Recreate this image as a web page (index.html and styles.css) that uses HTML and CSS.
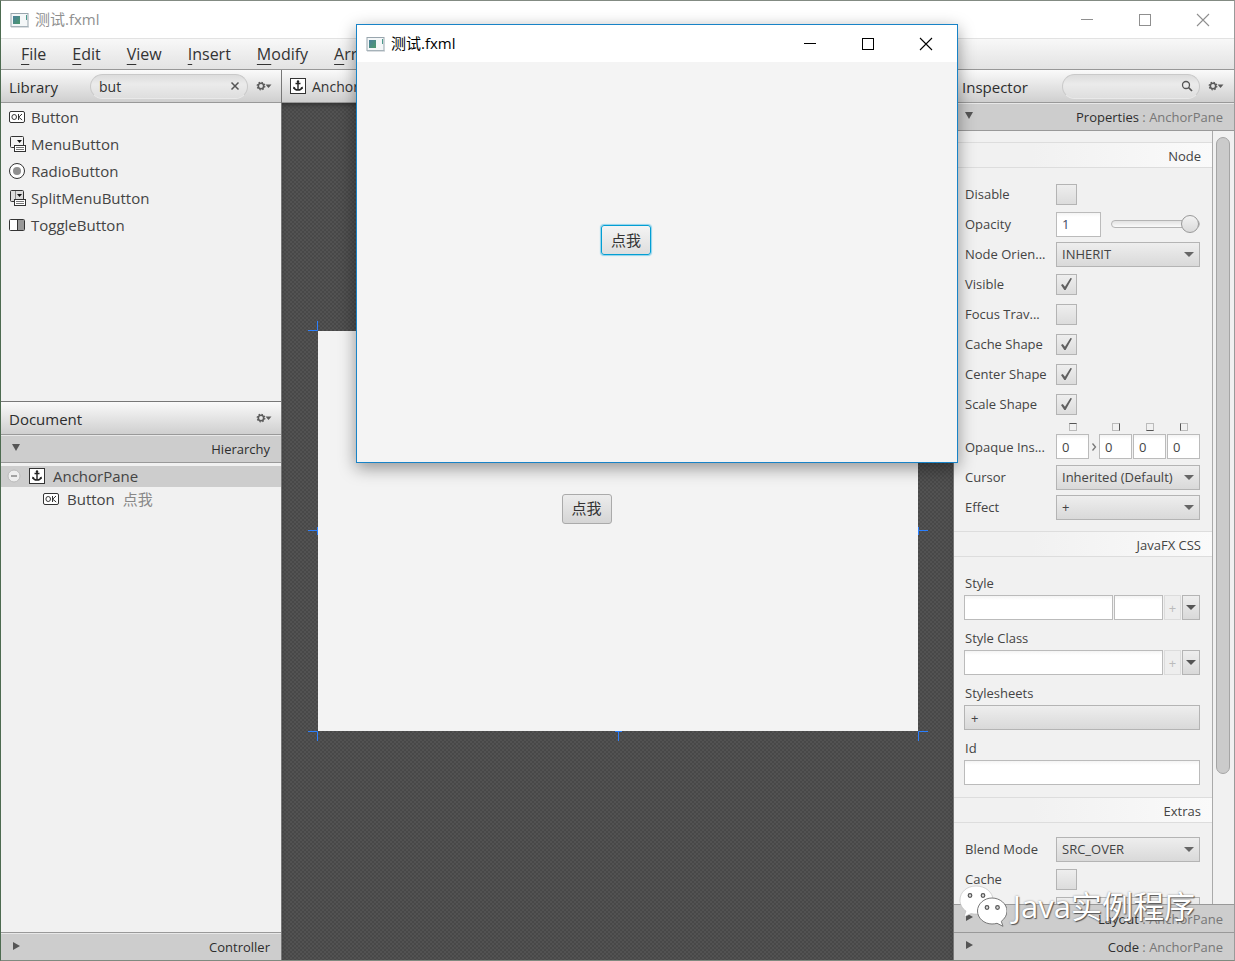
FILE: index.html
```html
<!DOCTYPE html>
<html lang="en">
<head>
<meta charset="utf-8">
<title>测试.fxml</title>
<link rel="stylesheet" href="styles.css">
</head>
<body>
<svg class="defs" aria-hidden="true">
  <defs>
    <linearGradient id="tealfill" x1="0" y1="0" x2="1" y2="1"><stop offset="0" stop-color="#4a7f9c"/><stop offset="1" stop-color="#4c9a6c"/></linearGradient>
    <symbol id="app" viewBox="0 0 20 16"><rect x="1" y="1.500" width="17" height="13" fill="#f4f7f8" stroke="#98a5ad"/><rect x="3" y="4" width="7" height="8" fill="url(#tealfill)"/><path d="M16.500 3v5" stroke="#4c9a8c"/><path d="M1 15h18" stroke="#b5bec4"/></symbol>
    <symbol id="ok" viewBox="0 0 18 18"><rect x="1.500" y="3.500" width="15" height="11" rx="1.500" fill="#fff" stroke="#333"/><ellipse cx="6.200" cy="9" rx="2.300" ry="2.500" fill="none" stroke="#333"/><path d="M10.500 6v6M14 6l-3.300 3.200L14.200 12" fill="none" stroke="#333"/></symbol>
    <symbol id="menub" viewBox="0 0 18 18"><rect x="2.500" y="1.500" width="13" height="11" rx="1" fill="#f4f4f4" stroke="#333"/><path d="M9 5h5l-2.500 3z" fill="#111"/><rect x="6.500" y="10.500" width="11" height="6" fill="#fff" stroke="#333"/><path d="M8 12.500h8M8 14.500h8" stroke="#777"/></symbol>
    <symbol id="splitb" viewBox="0 0 18 18"><rect x="2.500" y="1.500" width="13" height="11" rx="1" fill="#ddd" stroke="#333"/><path d="M7.500 2v8" stroke="#888"/><path d="M9 5h5l-2.500 3z" fill="#111"/><rect x="6.500" y="10.500" width="11" height="6" fill="#fff" stroke="#333"/><path d="M8 12.500h8M8 14.500h8" stroke="#777"/></symbol>
    <symbol id="radiob" viewBox="0 0 18 18"><circle cx="9" cy="9" r="7.500" fill="#fff" stroke="#333"/><circle cx="9" cy="9" r="4" fill="#8f8f8f"/></symbol>
    <symbol id="toggleb" viewBox="0 0 18 18"><rect x="1.500" y="3.500" width="15" height="11" rx="1" fill="#fff"/><path d="M9 4h7v10H9z" fill="#999"/><rect x="1.500" y="3.500" width="15" height="11" rx="1" fill="none" stroke="#333"/><path d="M9.500 4v10" stroke="#333"/></symbol>
    <symbol id="anchor" viewBox="0 0 18 18"><rect x="1.500" y="1.500" width="15" height="15" fill="#fff" stroke="#333"/><path d="M9 4v9M6.500 6.500h5" fill="none" stroke="#222" stroke-width="1.400"/><path d="M5 10.500c.5 2 2 2.500 4 2.500s3.500-.5 4-2.500" fill="none" stroke="#222" stroke-width="1.500"/><circle cx="9" cy="4.500" r="1.200" fill="#222"/><path d="M4 12l.5-2.500 2 1.500zM14 12l-.5-2.500-2 1.500z" fill="#222"/></symbol>
    <symbol id="gear" viewBox="0 0 16 12"><circle cx="5" cy="6" r="2.700" fill="none" stroke="#5a5a5a" stroke-width="1.600"/><circle cx="5" cy="6" r="3.800" fill="none" stroke="#5a5a5a" stroke-width="1.200" stroke-dasharray="1.500 1.485"/><path d="M9.500 4.500h6L12.500 8z" fill="#5a5a5a"/></symbol>
    <symbol id="min" viewBox="0 0 14 14"><path d="M1 6.500h12" stroke="currentColor"/></symbol>
    <symbol id="max" viewBox="0 0 14 14"><rect x="1.500" y="1.500" width="11" height="11" fill="none" stroke="currentColor"/></symbol>
    <symbol id="close" viewBox="0 0 14 14"><path d="M1 1l12 12M13 1L1 13" stroke="currentColor" stroke-width="1.100"/></symbol>
  </defs>
</svg>

<div class="app">
  <header class="titlebar">
    <svg class="app-icon"><use href="#app"/></svg>
    <span class="title">测试.fxml</span>
    <div class="window-buttons">
      <button aria-label="Minimize"><svg><use href="#min"/></svg></button>
      <button aria-label="Maximize"><svg><use href="#max"/></svg></button>
      <button aria-label="Close"><svg><use href="#close"/></svg></button>
    </div>
  </header>

  <nav class="menubar">
    <button><u>F</u>ile</button><button><u>E</u>dit</button><button><u>V</u>iew</button><button><u>I</u>nsert</button><button><u>M</u>odify</button><button><u>A</u>rrange</button>
  </nav>

  <main class="workspace">
    <aside class="left">
      <section class="library">
        <div class="panel-head">
          <h2>Library</h2>
          <div class="search">
            <input type="text" value="but" aria-label="Search library">
            <button aria-label="Clear search"><svg viewBox="0 0 12 12"><path d="M2.500 2.500l7 7M9.500 2.500l-7 7" stroke="#555" stroke-width="1.500"/></svg></button>
          </div>
          <button class="gear" aria-label="Library options"><svg><use href="#gear"/></svg></button>
        </div>
        <ul class="items">
          <li><svg><use href="#ok"/></svg>Button</li>
          <li><svg><use href="#menub"/></svg>MenuButton</li>
          <li><svg><use href="#radiob"/></svg>RadioButton</li>
          <li><svg><use href="#splitb"/></svg>SplitMenuButton</li>
          <li><svg><use href="#toggleb"/></svg>ToggleButton</li>
        </ul>
      </section>
      <section class="document">
        <div class="panel-head">
          <h2>Document</h2>
          <button class="gear" aria-label="Document options"><svg><use href="#gear"/></svg></button>
        </div>
        <button class="accordion open"><i></i><span>Hierarchy</span></button>
        <ul class="tree">
          <li class="selected"><svg class="collapse" viewBox="0 0 14 14"><circle cx="7" cy="7" r="6" fill="#eee" stroke="#bbb"/><path d="M4 7h6" stroke="#888" stroke-width="1.500"/></svg><svg class="node"><use href="#anchor"/></svg>AnchorPane</li>
          <li class="child"><svg class="node"><use href="#ok"/></svg>Button <span class="muted">点我</span></li>
        </ul>
        <button class="accordion"><i></i><span>Controller</span></button>
      </section>
    </aside>

    <section class="center">
      <div class="panel-head crumbs"><svg><use href="#anchor"/></svg><span>AnchorPane</span></div>
      <div class="canvas">
        <div class="artboard">
          <svg class="handles" viewBox="0 0 620 420" fill="none" stroke="#2a7fff"><path d="M0 9.500h9.500V0M0 209.500h9M9.500 206v8M620 209.500h-10M610.500 206v8M310.500 411v9M307 410.500h7M610.500 420v-9.500H620M0 410.500h9.500V420"/></svg>
          <button class="fx-button">点我</button>
        </div>
      </div>
    </section>

    <aside class="inspector">
      <div class="panel-head">
        <h2>Inspector</h2>
        <div class="search">
          <input type="text" aria-label="Search properties">
          <button aria-label="Search"><svg viewBox="0 0 12 12" fill="none" stroke="#555"><circle cx="5" cy="5" r="3.500" stroke-width="1.300"/><path d="M7.500 7.500l3.500 3.500" stroke-width="1.700"/></svg></button>
        </div>
        <button class="gear" aria-label="Inspector options"><svg><use href="#gear"/></svg></button>
      </div>
      <button class="accordion open"><i></i><span>Properties <em>: AnchorPane</em></span></button>
      <div class="scroll">
        <div class="props">
          <h3>Node</h3>
          <div class="group">
            <div class="row"><label for="disable">Disable</label><input id="disable" type="checkbox"></div>
            <div class="row"><label for="opacity">Opacity</label><div class="opacity"><input id="opacity" type="text" value="1"><input type="range" min="0" max="1" step="0.1" value="1" aria-label="Opacity slider"></div></div>
            <div class="row"><label for="orient">Node Orien...</label><div class="combo"><select id="orient"><option>INHERIT</option></select></div></div>
            <div class="row"><label for="visible">Visible</label><input id="visible" type="checkbox" checked></div>
            <div class="row"><label for="focus">Focus Trav...</label><input id="focus" type="checkbox"></div>
            <div class="row"><label for="cshape">Cache Shape</label><input id="cshape" type="checkbox" checked></div>
            <div class="row"><label for="ceshape">Center Shape</label><input id="ceshape" type="checkbox" checked></div>
            <div class="row"><label for="sshape">Scale Shape</label><input id="sshape" type="checkbox" checked></div>
            <div class="row insets"><label for="inset-top">Opaque Ins...</label>
              <div class="inset-grid">
                <div class="inset"><b class="top"></b><input id="inset-top" type="text" value="0"></div>
                <svg class="chevron" viewBox="0 0 7 10"><path d="M2 1.500l3 3.500-3 3.500" fill="none" stroke="#777" stroke-width="1.300"/></svg>
                <div class="inset"><b class="right"></b><input type="text" value="0" aria-label="Right inset"></div>
                <div class="inset"><b class="bottom"></b><input type="text" value="0" aria-label="Bottom inset"></div>
                <div class="inset"><b class="left-side"></b><input type="text" value="0" aria-label="Left inset"></div>
              </div>
            </div>
            <div class="row"><label for="cursor">Cursor</label><div class="combo"><select id="cursor"><option>Inherited (Default)</option></select></div></div>
            <div class="row"><label for="effect">Effect</label><div class="combo"><select id="effect"><option>+</option></select></div></div>
          </div>
          <h3>JavaFX CSS</h3>
          <div class="group stacked">
            <div class="field"><label for="style">Style</label><div class="line"><input id="style" type="text"><input class="short" type="text" aria-label="Style value"><button class="add" disabled>+</button><button class="drop" aria-label="Style menu"><i></i></button></div></div>
            <div class="field"><label for="sclass">Style Class</label><div class="line"><input id="sclass" type="text"><button class="add" disabled>+</button><button class="drop" aria-label="Style class menu"><i></i></button></div></div>
            <div class="field"><label for="sheets">Stylesheets</label><div class="line"><button id="sheets" class="bar">+</button></div></div>
            <div class="field"><label for="fxid">Id</label><div class="line"><input id="fxid" type="text"></div></div>
          </div>
          <h3>Extras</h3>
          <div class="group">
            <div class="row"><label for="blend">Blend Mode</label><div class="combo"><select id="blend"><option>SRC_OVER</option></select></div></div>
            <div class="row"><label for="cache">Cache</label><input id="cache" type="checkbox"></div>
            <div class="row"><span></span><div class="combo"><select aria-label="Cache hint"><option></option></select></div></div>
          </div>
        </div>
        <div class="scrollbar"><div class="thumb"></div></div>
      </div>
      <button class="accordion"><i></i><span>Layout <em>: AnchorPane</em></span></button>
      <button class="accordion"><i></i><span>Code <em>: AnchorPane</em></span></button>
    </aside>
  </main>

  <section class="preview" aria-label="Preview window">
    <header class="titlebar">
      <svg class="app-icon"><use href="#app"/></svg>
      <span class="title">测试.fxml</span>
      <div class="window-buttons">
        <button aria-label="Minimize"><svg><use href="#min"/></svg></button>
        <button aria-label="Maximize"><svg><use href="#max"/></svg></button>
        <button aria-label="Close"><svg><use href="#close"/></svg></button>
      </div>
    </header>
    <div class="stage"><button class="fx-button focused">点我</button></div>
  </section>

  <div class="watermark">
    <svg viewBox="0 0 48 42"><path d="M17 1C8 1 1 7 1 15c0 4.500 2.300 8.500 6 11l-2 6 7-3.500c2 .5 4 .5 6 .5 8 0 16-6 16-14S26 1 17 1z" fill="#fff" stroke="#bbb" stroke-width=".6"/><path d="M33 13c-8 0-14.500 6-14.500 13S25 39 33 39c2 0 3.500-.3 5-.7l6 3-1.700-5c3.300-2.500 5.700-6 5.700-10.300 0-7-7-13-15-13z" fill="#fff" stroke="#777"/><g fill="#ddd" stroke="#555" stroke-width="1.200"><circle cx="11" cy="10.500" r="1.800"/><circle cx="24" cy="10.500" r="1.800"/><circle cx="28" cy="22.500" r="1.800"/><circle cx="38.500" cy="22.500" r="1.800"/></g></svg>
    <span>Java实例程序</span>
  </div>
</div>
</body>
</html>
```
FILE: styles.css
```css
* { box-sizing: border-box; }

body {
  margin: 0;
  font-family: "Open Sans", "Noto Sans CJK SC", sans-serif;
  font-size: 15px;
  color: #444;
}

button, input, select {
  font-family: inherit;
  font-size: 13px;
  color: #444;
  margin: 0;
  padding: 0;
}

button { border: 0; background: none; }
ul { list-style: none; margin: 0; padding: 0; }
h2, h3 { margin: 0; font-weight: 400; }
.defs { position: absolute; width: 0; height: 0; }

.app {
  position: relative;
  display: flex;
  flex-direction: column;
  height: 100vh;
  overflow: hidden;
  background: #f1f1f1;
  border: 1px solid #9a9a9a;
  border-top-color: #838b83;
  border-left-color: #4d6b50;
  border-bottom-color: #7f8a80;
}

/* Title bars */
.titlebar {
  flex: none;
  display: flex;
  align-items: center;
  height: 37px;
  padding: 0 2px 0 9px;
  background: #fff;
  color: #8f8f8f;
}
.app-icon { width: 20px; height: 16px; }
.title { margin-left: 5px; padding-bottom: 2px; line-height: 20px; }
.window-buttons { display: flex; margin-left: auto; color: #8f8f8f; }
.window-buttons button { width: 58px; height: 36px; color: inherit; }
.window-buttons svg { display: block; width: 14px; height: 14px; margin: 0 auto; }

/* Menu bar */
.menubar {
  flex: none;
  display: flex;
  height: 32px;
  padding-left: 7px;
  border-top: 1px solid #e2e2e2;
  border-bottom: 1px solid #979797;
  background: linear-gradient(#f8f8f8, #e3e3e3);
}
.menubar button { padding: 0 13px; font-size: 16px; color: #333; }
.menubar u { text-underline-offset: 4px; text-decoration-thickness: 1px; }

/* Workspace */
.workspace {
  flex: 1;
  min-height: 0;
  display: grid;
  grid-template-columns: 281px 1fr 281px;
}
.left, .center, .inspector { display: flex; flex-direction: column; min-height: 0; min-width: 0; }
.left { border-right: 1px solid #777; }
.inspector { border-left: 1px solid #777; }

.panel-head {
  flex: none;
  display: flex;
  align-items: center;
  height: 33px;
  padding: 0 9px 0 8px;
  border-bottom: 1px solid #999;
  background: linear-gradient(#fafafa, #cfcfcf);
  color: #333;
}
.panel-head h2 { flex: 1; padding-top: 1px; font-size: 15px; line-height: 20px; color: #2d2d2d; }
.gear { width: 16px; height: 14px; margin-left: 8px; }
.gear svg { display: block; width: 16px; height: 12px; }
.search {
  display: flex;
  align-items: center;
  width: 158px;
  height: 25px;
  padding: 0 6px 0 8px;
  border: 1px solid #c9c9c9;
  border-bottom-color: #e9e9e9;
  border-radius: 13px;
  background: linear-gradient(#dcdcdc, #ebebeb 40%, #dedede);
}
.search input { flex: 1; min-width: 0; border: 0; outline: 0; background: none; font-size: 14px; color: #333; }
.search svg { display: block; width: 12px; height: 12px; }
.inspector .search { width: 138px; }
.inspector .panel-head { padding-right: 10px; }

.library { flex: none; height: 332px; border-bottom: 1px solid #777; }
.items li { display: flex; align-items: center; gap: 5px; height: 27px; padding-left: 7px; }
.items svg, .node, .crumbs svg { flex: none; width: 18px; height: 18px; }

.document { flex: 1; min-height: 0; display: flex; flex-direction: column; }
.tree { flex: 1; padding-top: 3px; border-bottom: 1px solid #999; }
.tree li { display: flex; align-items: center; height: 23px; line-height: 20px; padding: 0 0 2px 6px; }
.tree .selected { height: 21px; margin-bottom: 1px; background: #cdcdcd; }
.tree .node { margin: 0 7px; }
.tree .child { padding-left: 34px; }
.collapse { width: 14px; height: 14px; }
.muted { margin-left: 8px; color: #888; }

.accordion {
  flex: none;
  display: flex;
  align-items: center;
  justify-content: space-between;
  height: 27px;
  padding: 0 11px 0 10px;
  border-top: 1px solid #e8e8e8;
  background: #cdcdcd;
  font-size: 13px;
  color: #2d2d2d;
}
.accordion i {
  border: 4px solid transparent;
  border-left: 7px solid #555;
  border-right: 0;
  margin: 0 0 3px 2px;
}
.accordion.open { height: 28px; border-bottom: 1px solid #999; }
.accordion.open i { border: 4px solid transparent; border-top: 7px solid #555; border-bottom: 0; margin-left: 1px; }
.accordion em { font-style: normal; color: #777; }
.scroll ~ .accordion { height: 28px; border-top-color: #999; }

/* Editor */
.crumbs { padding-left: 7px; gap: 5px; font-size: 14px; }
.canvas {
  flex: 1;
  min-height: 0;
  display: flex;
  align-items: center;
  justify-content: center;
  padding-bottom: 2px;
  background-color: #4b4b4b;
  background-image: conic-gradient(#525252 25%, #484848 0 50%, #525252 0 75%, #484848 0);
  background-size: 4px 4px;
  box-shadow: inset 0 4px 5px -2px #333;
}
.artboard { position: relative; flex: none; width: 600px; height: 400px; background: #f3f3f3; }
.handles { position: absolute; left: -10px; top: -10px; width: 620px; height: 420px; }
.fx-button {
  position: absolute;
  left: 244px;
  top: 163px;
  width: 50px;
  height: 30px;
  padding-bottom: 2px;
  border: 1px solid #aaa;
  border-radius: 3px;
  background: linear-gradient(#ececec, #d5d5d5);
  font-size: 15px;
  color: #333;
}
.fx-button.focused { border: 1px solid #039ed3; box-shadow: 0 0 1px 1px #8fd3ec; background: linear-gradient(#f4f4f4, #dedede); }

/* Inspector */
.scroll { flex: 1; min-height: 0; display: flex; overflow: hidden; font-size: 13px; }
.props { flex: 1; min-width: 0; padding-top: 11px; }
.props h3 {
  height: 26px;
  padding-right: 11px;
  border-top: 1px solid #ddd;
  border-bottom: 1px solid #ddd;
  background: linear-gradient(90deg, #f1f1f1 30%, #fafafa);
  font-size: 13px;
  line-height: 26px;
  text-align: right;
}
.group { padding: 11px 12px 9px 11px; }
.row { display: grid; grid-template-columns: 91px 1fr; align-items: center; height: 30px; }
.row label { white-space: nowrap; }

input[type="checkbox"] {
  appearance: none;
  display: grid;
  place-items: center;
  width: 21px;
  height: 21px;
  border: 1px solid #b4b4b4;
  background: linear-gradient(#eee, #dcdcdc);
}
input[type="checkbox"]:checked::after {
  content: "";
  width: 11px;
  height: 12px;
  background: #5f5f5f;
  clip-path: polygon(0 58%, 16% 50%, 36% 72%, 86% 0, 100% 4%, 42% 100%, 30% 100%);
}

.props input[type="text"] {
  min-width: 0;
  width: 100%;
  height: 25px;
  padding: 0 5px;
  border: 1px solid #bbb;
  background: linear-gradient(#f4f4f4, #fff 4px);
}
.combo { position: relative; }
.combo::after {
  content: "";
  position: absolute;
  top: 10px;
  right: 6px;
  border: 5px solid transparent;
  border-top-color: #666;
  border-bottom: 0;
  pointer-events: none;
}
select {
  appearance: none;
  display: block;
  width: 100%;
  height: 25px;
  padding: 0 5px;
  border: 1px solid #b4b4b4;
  border-radius: 0;
  background: linear-gradient(#eee, #d9d9d9);
}
.opacity { display: flex; gap: 10px; }
.opacity input[type="text"] { flex: none; width: 45px; color: #3d4a66; }
.opacity input[type="range"] { appearance: none; flex: 1; width: 0; min-width: 0; height: 25px; background: none; }
input[type="range"]::-webkit-slider-runnable-track {
  height: 8px;
  border: 1px solid #b4b4b4;
  border-radius: 4px;
  background: linear-gradient(#e2e2e2, #fafafa);
}
input[type="range"]::-webkit-slider-thumb {
  appearance: none;
  width: 18px;
  height: 18px;
  margin-top: -6px;
  border: 1px solid #999;
  border-radius: 50%;
  background: linear-gradient(#f2f2f2, #dadada);
}

.row.insets { height: 43px; align-items: end; }
.insets label { line-height: 29px; }
.inset-grid { display: flex; align-items: flex-end; gap: 1px; padding-bottom: 3px; }
.inset { flex: 1; min-width: 0; display: flex; flex-direction: column; align-items: center; gap: 3px; }
.inset b { width: 8px; height: 8px; border: 1px solid #bbb; }
.inset .top { border-top-color: #555; }
.inset .right { border-right-color: #555; }
.inset .bottom { border-bottom-color: #555; }
.inset .left-side { border-left-color: #555; }
.chevron { flex: none; width: 8px; height: 10px; margin-bottom: 7px; }

.stacked { padding: 14px 12px 11px 10px; }
.field { height: 55px; }
.field label { display: block; padding-left: 1px; line-height: 24px; }
.line { display: flex; gap: 1px; height: 25px; }
.line .short { flex: none; max-width: 49px; }
.add, .bar, .drop { flex: none; height: 25px; border: 1px solid #b4b4b4; background: linear-gradient(#eee, #d9d9d9); }
.add { width: 17px; border-color: #dcdcdc; background: #eee; color: #bbb; }
.drop { width: 18px; }
.drop i { display: block; width: 0; margin: 0 auto; border: 5px solid transparent; border-top-color: #555; border-bottom: 0; }
.bar { flex: 1; padding: 0 6px; text-align: left; }
.stacked .field:last-child { height: 50px; }

.scrollbar { flex: none; width: 22px; padding: 6px 4px 0 3px; border-left: 1px solid #aaa; }
.thumb { height: 83%; border: 1px solid #a5a5a5; border-radius: 7px; background: #cbcbcb; }

/* Preview window floating over the editor */
.preview {
  position: absolute;
  left: 355px;
  top: 23px;
  width: 602px;
  border: 1px solid #1883c7;
  background: #f4f4f4;
  box-shadow: 0 5px 16px rgba(0, 0, 0, .4);
}
.preview .title, .preview .window-buttons { color: #000; }
.stage { position: relative; height: 400px; }

.watermark {
  position: absolute;
  right: 39px;
  bottom: 33px;
  display: flex;
  align-items: center;
  gap: 6px;
  font-size: 31px;
  line-height: 42px;
  color: #fff;
  text-shadow: 1px 1px 1px #555, 0 0 2px #888;
  pointer-events: none;
}
.watermark svg { width: 48px; height: 42px; }
```
